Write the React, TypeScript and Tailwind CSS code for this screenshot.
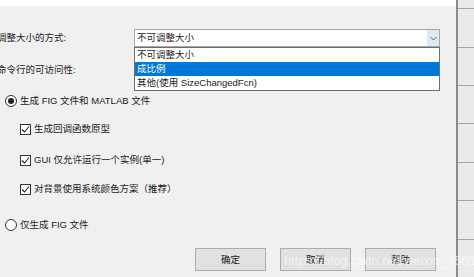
import React from "react";

const font = { fontFamily: '"Liberation Sans", "Noto Sans CJK SC", sans-serif' };

function Check({ label }: { label: string }) {
  return (
    <div className="flex items-center h-4 pl-[20px]">
      <span className="w-[11px] h-[11px] border border-[#333] bg-white flex items-center justify-center">
        <svg width="9" height="9" viewBox="0 0 9 9">
          <path d="M1 4.5 L3.5 7 L8 1.5" fill="none" stroke="#222" strokeWidth="1.1" />
        </svg>
      </span>
      <span className="ml-[3px]">{label}</span>
    </div>
  );
}

function Radio({ label, on }: { label: string; on?: boolean }) {
  return (
    <div className="flex items-center h-4 pl-[5px]">
      <span className="w-[12px] h-[12px] rounded-full border border-[#333] bg-white flex items-center justify-center">
        {on && <span className="w-[6px] h-[6px] rounded-full bg-[#222]" />}
      </span>
      <span className="ml-[3px]">{label}</span>
    </div>
  );
}

function Btn({ label }: { label: string }) {
  return (
    <div className="w-[71px] h-[23px] bg-[#e1e1e1] border border-[#adadad] flex items-center justify-center">
      {label}
    </div>
  );
}

export default function App() {
  return (
    <div className="relative flex w-[474px] h-[277px] overflow-hidden text-[9.5px] leading-[14px] text-[#1a1a1a]" style={font}>
      <div className="w-[456px] h-full bg-[#f0f0f0] flex flex-col">
        <div className="h-[6px] bg-white" />
        <div className="flex items-center mt-[23px] h-[18px]">
          <span className="ml-[-3px] w-[137px]">调整大小的方式:</span>
          <div className="relative w-[306px] h-[18px] bg-white border border-[#a8a8a8] flex items-center">
            <span className="pl-[2px] flex-1">不可调整大小</span>
            <span className="w-[12px] h-full bg-[#dbeaf7] flex items-center justify-center">
              <svg width="7" height="5" viewBox="0 0 7 5">
                <path d="M0.5 1 L3.5 4 L6.5 1" fill="none" stroke="#555" strokeWidth="0.9" />
              </svg>
            </span>
            <div className="absolute left-[-1px] top-[17px] w-[306px] bg-white border border-[#6e6e6e] z-10">
              <div className="h-[14px] flex items-center pl-[2px]">不可调整大小</div>
              <div className="h-[14px] flex items-center pl-[2px] bg-[#0078d7] text-white">成比例</div>
              <div className="h-[14px] flex items-center pl-[2px]">其他(使用 SizeChangedFcn)</div>
            </div>
          </div>
        </div>
        <div className="mt-[15px] h-4 flex items-center">
          <span className="ml-[-3px]">命令行的可访问性:</span>
        </div>
        <div className="mt-[15px]"><Radio label="生成 FIG 文件和 MATLAB 文件" on /></div>
        <div className="mt-[12px]"><Check label="生成回调函数原型" /></div>
        <div className="mt-[15px]"><Check label="GUI 仅允许运行一个实例(单一)" /></div>
        <div className="mt-[13px]"><Check label="对背景使用系统颜色方案（推荐）" /></div>
        <div className="mt-[20px]"><Radio label="仅生成 FIG 文件" /></div>
        <div className="mt-[15px] flex gap-[14px] pl-[195px]">
          <Btn label="确定" />
          <Btn label="取消" />
          <Btn label="帮助" />
        </div>
      </div>
      <div className="w-[2px] h-full bg-[#8c8c8c]" />
      <div className="flex-1 h-full bg-[#ebebeb] flex flex-col">
        <div className="h-[9px]" />
        {[0, 1, 2, 3, 4, 5, 6].map((i) => (
          <div key={i} className="h-[42px] border-t border-[#a6a6a6]" />
        ))}
      </div>
      <div className="absolute left-[284px] top-[254px] text-[13px] text-white/60 whitespace-nowrap">
        https://blog.csdn.net/weixin_45015275
      </div>
    </div>
  );
}
